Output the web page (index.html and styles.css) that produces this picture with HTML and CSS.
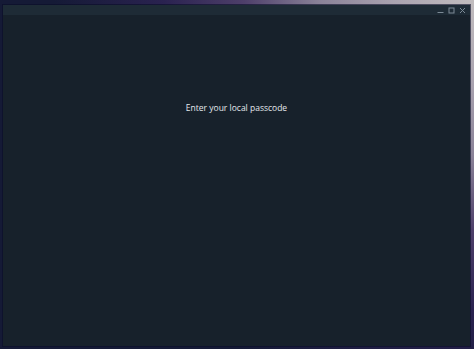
FILE: index.html
```html
<!DOCTYPE html>
<html>
<head>
<meta charset="utf-8">
<link rel="stylesheet" href="styles.css">
</head>
<body>
<div class="window">
  <div class="titlebar">
    <span class="btn btn-min"><svg width="7" height="7" viewBox="0 0 7 7"><path d="M0.5 5.5h6" stroke="#7c8a96" stroke-width="1"/></svg></span>
    <span class="btn btn-max"><svg width="7" height="7" viewBox="0 0 7 7"><rect x="1" y="1" width="5" height="5" fill="none" stroke="#7c8a96" stroke-width="1"/></svg></span>
    <span class="btn btn-close"><svg width="7" height="7" viewBox="0 0 7 7"><path d="M1 1l5 5M6 1l-5 5" stroke="#7c8a96" stroke-width="1"/></svg></span>
  </div>
  <div class="content">
    <div class="prompt">Enter your local passcode</div>
  </div>
</div>
</body>
</html>
```
FILE: styles.css
```css
html, body {
  margin: 0;
  padding: 0;
  height: 100%;
}
body {
  background: radial-gradient(circle at 474px 0, #c2bdbf 0px, #aaa3b0 80px, #8a8298 155px, #4e3f6a 230px, #2a2250 310px, #151a36 420px);
  padding: 5px 4px 3px 3px;
  box-sizing: border-box;
  font-family: "Open Sans", "Noto Sans", sans-serif;
  overflow: hidden;
}
.window {
  height: 100%;
  display: flex;
  flex-direction: column;
  background: #17212b;
  box-shadow: 0 0 0 1px rgba(10, 14, 40, 0.6);
}
.titlebar {
  height: 10px;
  background: #1e2b36;
  display: flex;
  justify-content: flex-end;
  align-items: center;
  gap: 4px;
  padding-right: 4px;
}
.btn {
  width: 7px;
  height: 7px;
  display: flex;
}
.content {
  flex: 1;
  display: flex;
  justify-content: center;
  padding-top: 87px;
}
.prompt {
  color: #e4e8ec;
  font-size: 8.5px;
  line-height: 11px;
  height: 11px;
}
```
